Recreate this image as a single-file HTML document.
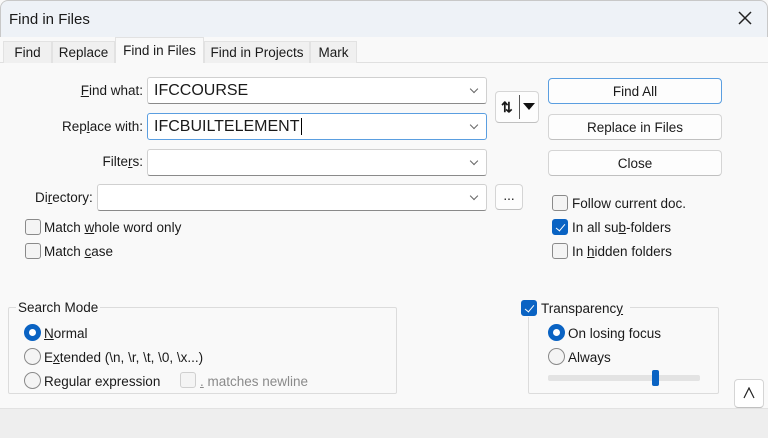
<!DOCTYPE html>
<html><head><style>
*{box-sizing:border-box;margin:0;padding:0}
body{width:768px;height:438px;overflow:hidden;background:#f9f9f9;font-family:"Liberation Sans",sans-serif;font-size:13.5px;color:#1a1a1a;position:relative}
.a{position:absolute}
.title{left:0;top:0;width:768px;height:37px;background:#eef2f7;border:1px solid #c8c8c8;border-bottom:none;border-radius:8px 8px 0 0}
.tab{top:41px;height:22px;background:#f0f0f0;border:1px solid #e2e2e2;border-bottom:none;text-align:center;line-height:22px;font-size:13.5px}
.combo{background:#fff;border:1px solid #d0d0d0;border-bottom-color:#8a8a8a;border-radius:3px;height:27px;padding-left:6px;line-height:26px;font-size:16px}
.combo::after{content:"";position:absolute;right:9px;top:8px;width:5px;height:5px;border-right:1px solid #666;border-bottom:1px solid #666;transform:rotate(45deg)}
.lbl{text-align:right;width:140px;left:3px}
.btn{background:#fdfdfd;border:1px solid #d5d5d5;border-bottom-color:#c0c0c0;border-radius:4px;text-align:center;line-height:25px}
.cb{width:16px;height:16px;border:1px solid #8a8a8a;border-radius:3px;background:#f4f4f4}
.cb.on{background:#0a63c3;border-color:#0a63c3}
.cb.on::after{content:"";position:absolute;left:5px;top:2px;width:4px;height:8px;border-right:1.5px solid #fff;border-bottom:1.5px solid #fff;transform:rotate(40deg)}
.rd{width:17px;height:17px;border:1px solid #8a8a8a;border-radius:50%;background:#f4f4f4}
.rd.on{background:#0a63c3;border-color:#0a63c3}
.rd.on::after{content:"";position:absolute;left:4px;top:4px;width:7px;height:7px;border-radius:50%;background:#fff}
.t{line-height:20px}
.grp{border:1px solid #dcdcdc;border-radius:2px}
u{text-decoration:underline}
</style></head><body>
<div class="a title"></div>
<div class="a" style="left:9px;top:11px;font-size:15px">Find in Files</div>
<svg class="a" style="left:737px;top:10px" width="16" height="16"><path d="M2 2L14 14M14 2L2 14" stroke="#222" stroke-width="1.5"/></svg>
<div class="a" style="left:0;top:62px;width:768px;height:1px;background:#e0e0e0"></div>
<div class="a tab" style="left:3px;width:49px">Find</div>
<div class="a tab" style="left:52px;width:63px">Replace</div>
<div class="a tab" style="left:115px;width:89px;top:37px;height:26px;background:#f9f9f9;line-height:26px">Find in Files</div>
<div class="a tab" style="left:204px;width:106px">Find in Projects</div>
<div class="a tab" style="left:310px;width:47px">Mark</div>

<div class="a lbl t" style="top:81px"><u>F</u>ind what:</div>
<div class="a combo" style="left:147px;top:77px;width:340px">IFCCOURSE</div>
<div class="a lbl t" style="top:117px">Rep<u>l</u>ace with:</div>
<div class="a combo" style="left:147px;top:113px;width:340px;border-color:#5a9ee0">IFCBUILTELEMENT<span style="border-left:1px solid #000;margin-left:1px"></span></div>
<div class="a lbl t" style="top:152px">Filte<u>r</u>s:</div>
<div class="a combo" style="left:147px;top:149px;width:340px"></div>
<div class="a t" style="left:35px;top:188px">Di<u>r</u>ectory:</div>
<div class="a combo" style="left:97px;top:184px;width:390px"></div>
<div class="a btn" style="left:495px;top:184px;width:28px;height:26px;line-height:22px">...</div>
<div class="a btn" style="left:495px;top:91px;width:44px;height:32px"></div>
<div class="a" style="left:501px;top:99px;font-weight:bold;font-size:14px">⇅</div>
<div class="a" style="left:519px;top:95px;width:1px;height:24px;background:#555"></div>
<svg class="a" style="left:523px;top:103px" width="12" height="8"><path d="M0 0H12L6 7Z" fill="#111"/></svg>

<div class="a btn" style="left:548px;top:78px;width:174px;height:26px;border-color:#5a9ee0">Find All</div>
<div class="a btn" style="left:548px;top:114px;width:174px;height:26px">Replace in Files</div>
<div class="a btn" style="left:548px;top:150px;width:174px;height:26px">Close</div>

<div class="a cb" style="left:552px;top:195px"></div><div class="a t" style="left:572px;top:194px">Follow current doc.</div>
<div class="a cb on" style="left:552px;top:219px"></div><div class="a t" style="left:572px;top:218px">In all su<u>b</u>-folders</div>
<div class="a cb" style="left:552px;top:243px"></div><div class="a t" style="left:572px;top:242px">In <u>h</u>idden folders</div>

<div class="a cb" style="left:25px;top:219px"></div><div class="a t" style="left:44px;top:218px">Match <u>w</u>hole word only</div>
<div class="a cb" style="left:25px;top:243px"></div><div class="a t" style="left:44px;top:242px">Match <u>c</u>ase</div>

<div class="a grp" style="left:8px;top:307px;width:389px;height:87px"></div>
<div class="a t" style="left:16px;top:298px;background:#f9f9f9;padding:0 2px">Search Mode</div>
<div class="a rd on" style="left:24px;top:324px"></div><div class="a t" style="left:44px;top:324px"><u>N</u>ormal</div>
<div class="a rd" style="left:24px;top:348px"></div><div class="a t" style="left:44px;top:348px">E<u>x</u>tended (\n, \r, \t, \0, \x...)</div>
<div class="a rd" style="left:24px;top:372px"></div><div class="a t" style="left:44px;top:372px">Re<u>g</u>ular expression</div>
<div class="a cb" style="left:180px;top:372px;border-color:#cfcfcf"></div><div class="a t" style="left:200px;top:372px;color:#8a8a8a"><u>.</u> matches newline</div>

<div class="a grp" style="left:528px;top:307px;width:191px;height:87px"></div>
<div class="a" style="left:520px;top:299px;width:110px;height:18px;background:#f9f9f9"></div>
<div class="a cb on" style="left:521px;top:300px"></div><div class="a t" style="left:541px;top:299px">Transparenc<u>y</u></div>
<div class="a rd on" style="left:548px;top:324px"></div><div class="a t" style="left:568px;top:324px">On losing focus</div>
<div class="a rd" style="left:548px;top:348px"></div><div class="a t" style="left:568px;top:348px">Always</div>
<div class="a" style="left:548px;top:375px;width:152px;height:6px;background:#e3e3e3;border-radius:2px"></div>
<div class="a" style="left:652px;top:370px;width:7px;height:16px;background:#0a63c3;border-radius:2px"></div>
<div class="a btn" style="left:734px;top:379px;width:30px;height:29px;background:#fff"></div>
<svg class="a" style="left:743px;top:387px" width="12" height="12"><path d="M1 11L6 1L11 11" stroke="#222" stroke-width="1.2" fill="none"/></svg>

<div class="a" style="left:0;top:408px;width:768px;height:30px;background:#eeeeee;border-top:1px solid #e2e2e2"></div>
</body></html>
